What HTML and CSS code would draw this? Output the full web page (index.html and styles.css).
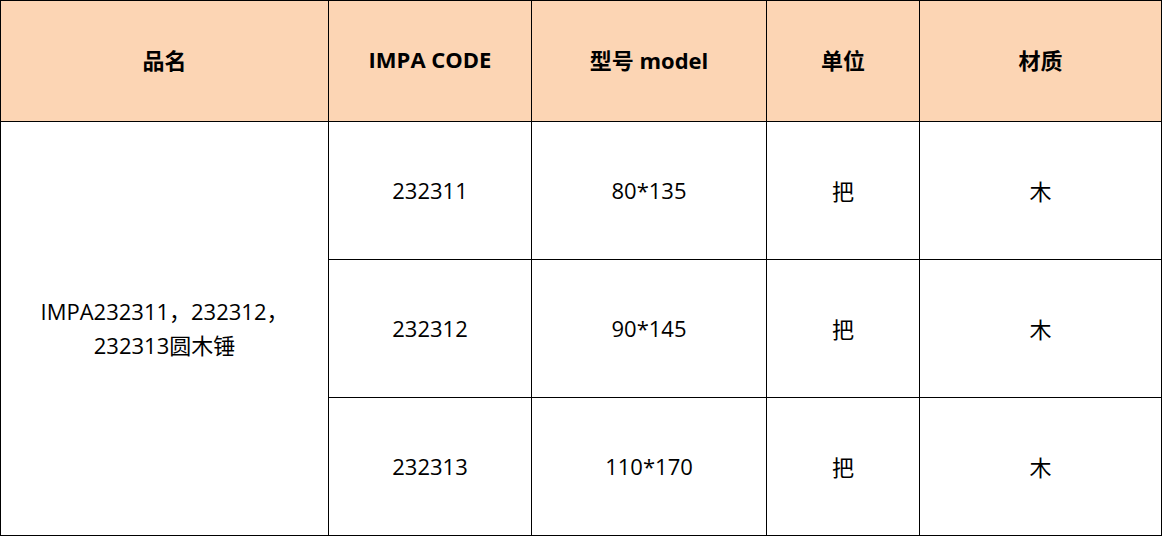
FILE: index.html
```html
<!DOCTYPE html>
<html lang="zh">
<head>
<meta charset="utf-8">
<link rel="stylesheet" href="styles.css">
</head>
<body>
<table class="spec">
  <colgroup>
    <col class="c1"><col class="c2"><col class="c3"><col class="c4"><col class="c5">
  </colgroup>
  <thead>
    <tr class="head">
      <th>品名</th>
      <th>IMPA CODE</th>
      <th>型号 model</th>
      <th>单位</th>
      <th>材质</th>
    </tr>
  </thead>
  <tbody>
    <tr class="row">
      <td rowspan="3" class="name">IMPA232311，232312，<br>232313圆木锤</td>
      <td>232311</td>
      <td>80*135</td>
      <td>把</td>
      <td>木</td>
    </tr>
    <tr class="row">
      <td>232312</td>
      <td>90*145</td>
      <td>把</td>
      <td>木</td>
    </tr>
    <tr class="row">
      <td>232313</td>
      <td>110*170</td>
      <td>把</td>
      <td>木</td>
    </tr>
  </tbody>
</table>
</body>
</html>
```

FILE: styles.css
```css
html, body {
  margin: 0;
  padding: 0;
  background: #ffffff;
}
.spec {
  border-collapse: collapse;
  table-layout: fixed;
  width: 1161px;
  font-family: "Open Sans", "Noto Sans CJK SC", sans-serif;
  font-size: 22px;
  color: #000;
}
.c1 { width: 328px; }
.c2 { width: 203px; }
.c3 { width: 235px; }
.c4 { width: 153px; }
.c5 { width: 242px; }
.spec th, .spec td {
  border: 1px solid #000;
  text-align: center;
  vertical-align: middle;
  padding: 0;
}
.head th {
  background: #fcd5b4;
  font-weight: bold;
  height: 116px;
  padding-bottom: 4px;
}
.row td {
  height: 136px;
  padding-bottom: 1px;
}
.name {
  line-height: 34px;
}
```
